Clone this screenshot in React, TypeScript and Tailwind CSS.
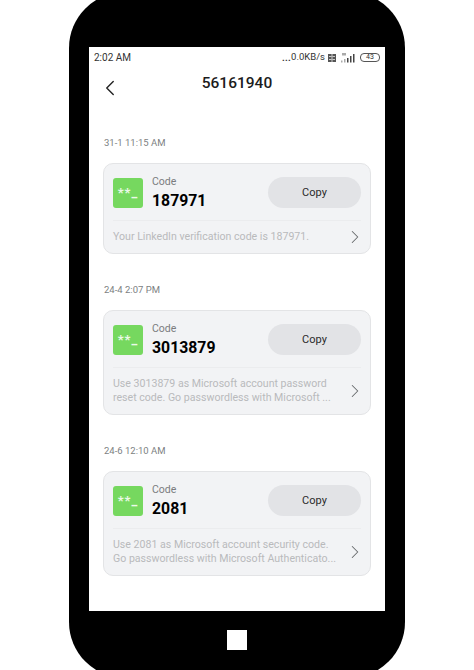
import { ChevronLeft, ChevronRight } from 'lucide-react';

const messages = [
  {
    date: '31-1 11:15 AM',
    code: '187971',
    text: 'Your LinkedIn verification code is 187971.',
  },
  {
    date: '24-4 2:07 PM',
    code: '3013879',
    text: 'Use 3013879 as Microsoft account password reset code. Go passwordless with Microsoft ...',
  },
  {
    date: '24-6 12:10 AM',
    code: '2081',
    text: 'Use 2081 as Microsoft account security code. Go passwordless with Microsoft Authenticato...',
  },
];

function StatusBar() {
  return (
    <div className="flex h-[20px] items-center justify-between pl-[5px] pr-[5px] pt-[1px] text-[9.5px] text-[#333333]">
      <span className="text-[10px]">2:02 AM</span>
      <div className="flex items-center">
        <span className="text-[9.5px] font-bold leading-none tracking-[0.3px]">...</span>
        <span className="mr-[3px]">0.0KB/s</span>
        {/* speed + signal + battery */}
        <svg width="8" height="8" viewBox="0 0 8 8" className="mr-[5px]">
          <rect width="8" height="8" fill="#555555" />
          <path d="M1 2.5h2.5M4.5 2.5h2.5M1 5.5h2.5M4.5 5.5h2.5M4 0v8" stroke="#ffffff" strokeWidth="0.7" />
        </svg>
        <svg width="14" height="10" viewBox="0 0 14 10" className="mr-[5px]">
          <rect x="0" y="7.5" width="1.5" height="2" fill="#aaaaaa" />
          <rect x="3" y="6" width="1.5" height="3.5" fill="#aaaaaa" />
          <rect x="6" y="5" width="1.5" height="4.5" fill="#444444" />
          <rect x="9" y="3" width="1.5" height="6.5" fill="#444444" />
          <rect x="12" y="1" width="1.5" height="8.5" fill="#444444" />
          <rect x="1" y="0" width="4" height="2.5" fill="#aaaaaa" />
        </svg>
        <div className="flex h-[9px] w-[20px] items-center justify-center rounded-[4px] border border-[#555555] text-[7px] leading-none">
          43
        </div>
      </div>
    </div>
  );
}

function MessageCard({ date, code, text }: { date: string; code: string; text: string }) {
  return (
    <div>
      <p className="ml-[15px] text-[9.5px] leading-[12px] text-[#7d7f82]">{date}</p>
      <div className="mx-[14px] mt-[14px] rounded-[10px] border border-[#e3e4e6] bg-[#f2f3f5] px-[9px] pt-[12px]">
        <div className="flex items-center">
          <div className="flex h-[30px] w-[30px] shrink-0 items-center justify-center rounded-[3px] bg-[#76d85f] text-[13px] font-bold leading-none tracking-[1px] text-white/85">
            **_
          </div>
          <div className="ml-[9px] flex-1">
            <p className="text-[10.5px] leading-[12px] text-[#7b7c7e]">Code</p>
            <p className="mt-[4px] text-[15.8px] font-bold leading-[17px] text-black">{code}</p>
          </div>
          <button className="h-[31px] w-[93px] rounded-full bg-[#e2e3e6] pt-[1px] text-[11px] text-[#2a2a2a]">
            Copy
          </button>
        </div>
        <div className="mt-[11px] flex items-center justify-between border-t border-[#ebecee] py-[9px]">
          <p className="w-[230px] text-[10.6px] leading-[14px] text-[#b9babc]">{text}</p>
          <ChevronRight size={22} strokeWidth={1.1} className="-my-[4px] mr-[-5px] text-[#66686b]" />
        </div>
      </div>
    </div>
  );
}

export default function App() {
  return (
    <div
      className="flex h-[670px] w-[474px] items-center justify-center overflow-hidden bg-white"
      style={{ fontFamily: 'Roboto, "Noto Sans", sans-serif' }}
    >
      {/* Phone frame */}
      <div className="flex h-[686px] w-[336px] shrink-0 flex-col items-center rounded-[56px] bg-black pt-[55px]">
        <div className="h-[564px] w-[296px] bg-white">
          <StatusBar />
          <div className="relative h-[37px]">
            <ChevronLeft size={26} strokeWidth={1.3} className="absolute left-[8px] top-[8px] text-[#222222]" />
            <p className="pt-[6px] text-center text-[15.5px] font-medium leading-[20px] text-[#1c1c1c]">56161940</p>
          </div>
          <div className="mt-[33px] flex flex-col gap-[30px]">
            {messages.map((m) => (
              <MessageCard key={m.date} {...m} />
            ))}
          </div>
        </div>
        <div className="mt-[19px] h-[20px] w-[20px] bg-white" />
      </div>
    </div>
  );
}
